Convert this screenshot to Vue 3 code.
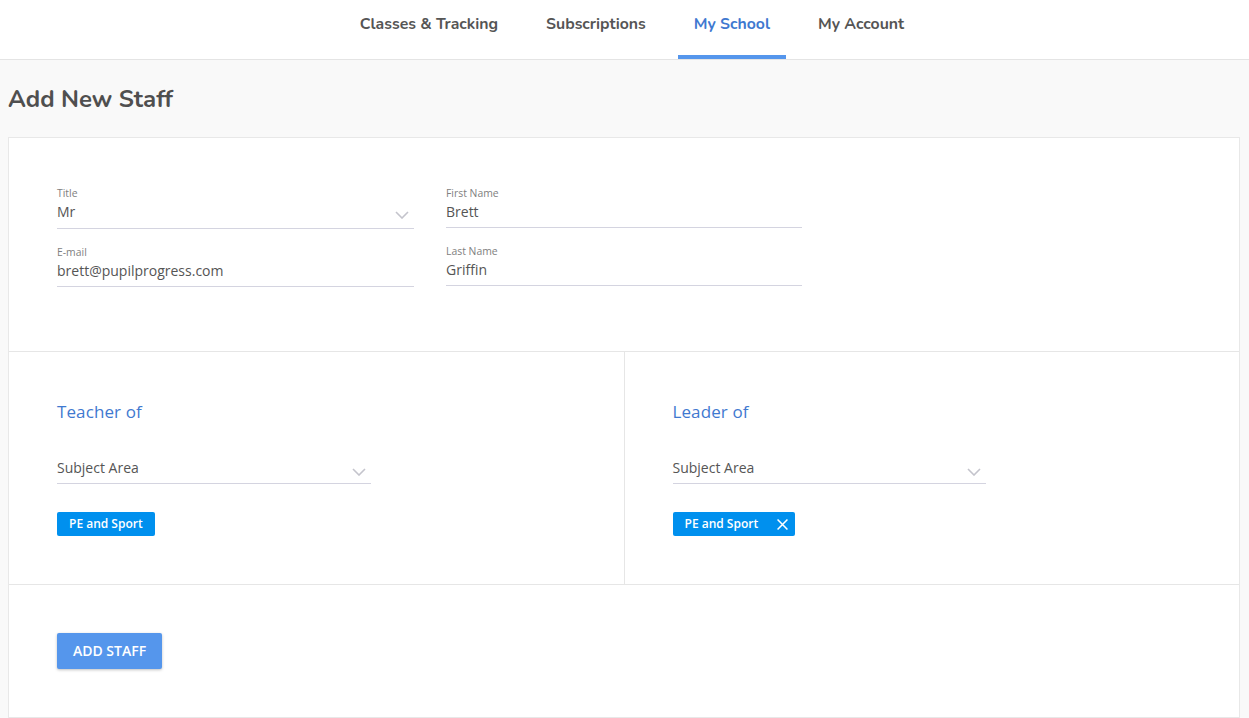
<script setup>
const tabs = [
  { label: 'Classes & Tracking', active: false },
  { label: 'Subscriptions', active: false },
  { label: 'My School', active: true },
  { label: 'My Account', active: false },
]
</script>

<template>
  <div class="page">
    <header class="topbar">
      <nav class="tabs">
        <a v-for="t in tabs" :key="t.label" class="tab" :class="{ active: t.active }">{{ t.label }}</a>
      </nav>
    </header>
    <h1 class="heading">Add New Staff</h1>
    <main class="card">
      <section class="details">
        <div class="col">
          <div class="field">
            <span class="lbl">Title</span>
            <span class="val">Mr</span>
            <svg class="chev" viewBox="0 0 14 8"><path d="M1 1l6 6 6-6" /></svg>
          </div>
          <div class="field second">
            <span class="lbl">E-mail</span>
            <span class="val">brett@pupilprogress.com</span>
          </div>
        </div>
        <div class="col">
          <div class="field alt">
            <span class="lbl">First Name</span>
            <span class="val">Brett</span>
          </div>
          <div class="field second alt">
            <span class="lbl">Last Name</span>
            <span class="val">Griffin</span>
          </div>
        </div>
      </section>
      <section class="split">
        <div class="pane">
          <h2 class="pane-title">Teacher of</h2>
          <div class="select">
            <span class="val">Subject Area</span>
            <svg class="chev" viewBox="0 0 14 8"><path d="M1 1l6 6 6-6" /></svg>
          </div>
          <div class="chip">PE and Sport</div>
        </div>
        <div class="pane right">
          <h2 class="pane-title">Leader of</h2>
          <div class="select">
            <span class="val">Subject Area</span>
            <svg class="chev" viewBox="0 0 14 8"><path d="M1 1l6 6 6-6" /></svg>
          </div>
          <div class="chip removable">
            PE and Sport
            <svg class="x" viewBox="0 0 10 10"><path d="M0.5 0.5l9 9M9.5 0.5l-9 9" /></svg>
          </div>
        </div>
      </section>
      <section class="actions">
        <button class="btn">ADD STAFF</button>
      </section>
    </main>
  </div>
</template>

<style>
body { margin: 0; background: #f8f8f8; }
</style>

<style scoped>
.page {
  height: 718px;
  overflow: hidden;
  background: #f9f9f9;
  font-family: "Open Sans", sans-serif;
  color: #555;
}
.topbar {
  height: 59px;
  background: #fff;
  border-bottom: 1px solid #e4e4e4;
  display: flex;
  justify-content: center;
}
.tabs {
  display: flex;
  gap: 16px;
  margin-left: 15px;
}
.tab {
  padding: 0 16px;
  height: 59px;
  box-sizing: border-box;
  border-bottom: 4px solid transparent;
  line-height: 48px;
  font-family: "Nunito", Lato, sans-serif;
  font-weight: 700;
  font-size: 15.8px;
  color: #555;
}
.tab.active {
  color: #3f79d0;
  border-bottom-color: #5596ec;
}
.heading {
  margin: 0;
  padding: 2px 8px 0;
  height: 77px;
  box-sizing: border-box;
  line-height: 75px;
  font-family: "Nunito", Lato, sans-serif;
  font-weight: 700;
  font-size: 24px;
  color: #4f4f4f;
}
.card {
  margin: 0 9px 0 8px;
  background: #fff;
  border: 1px solid #e8e8e8;
  box-sizing: border-box;
  height: 581px;
}
.details {
  height: 214px;
  box-sizing: border-box;
  padding: 48px 0 0 48px;
  display: flex;
  gap: 32px;
  border-bottom: 1px solid #e6e6e6;
}
.col { width: 357px; }
.col + .col { width: 356px; }
.field {
  position: relative;
  height: 43px;
  box-sizing: border-box;
  border-bottom: 1px solid #d4d4e0;
  display: flex;
  flex-direction: column;
}
.field.alt, .field.second { height: 42px; }
.field.second { margin-top: 16px; }
.lbl {
  font-size: 10.4px;
  line-height: 14px;
  margin-bottom: 2px;
  color: #808080;
}
.val {
  font-size: 14px;
  line-height: 19px;
  color: #555;
}
.chev {
  position: absolute;
  right: 5px;
  top: 25px;
  width: 14px;
  height: 8px;
  fill: none;
  stroke: #c4c4cc;
  stroke-width: 1.6;
}
.split {
  height: 233px;
  box-sizing: border-box;
  display: flex;
  border-bottom: 1px solid #e6e6e6;
}
.pane {
  width: 615px;
  box-sizing: border-box;
  padding: 48px 0 0 48px;
}
.pane.right {
  width: 616px;
  border-left: 1px solid #e6e6e6;
}
.pane-title {
  margin: 0;
  font-size: 17px;
  line-height: 24px;
  font-weight: 500;
  letter-spacing: 0.1px;
  color: #3f79d0;
}
.select {
  position: relative;
  width: 314px;
  height: 31px;
  margin-top: 29px;
  box-sizing: border-box;
  border-bottom: 1px solid #d4d4e0;
  padding-top: 3px;
}
.right .select { width: 313px; }
.select .chev { top: 15px; }
.chip {
  display: inline-flex;
  align-items: center;
  margin-top: 28px;
  height: 24px;
  padding: 0 12px 1px;
  box-sizing: border-box;
  border-radius: 2px;
  background: #0090ee;
  color: #fff;
  font-size: 12px;
  font-weight: 600;
}
.chip.removable { gap: 19px; padding-right: 7px; }
.x {
  width: 11px;
  height: 11px;
  margin-top: 1px;
  fill: none;
  stroke: #fff;
  stroke-width: 1.4;
}
.actions {
  padding: 48px 0 0 48px;
}
.btn {
  display: block;
  width: 105px;
  height: 36px;
  border: 0;
  padding: 0 0 1px;
  border-radius: 2px;
  background: #5596ec;
  color: #fff;
  font-family: inherit;
  font-size: 14px;
  font-weight: 600;
  box-shadow: 0 1px 3px rgba(0, 0, 0, 0.25);
}
</style>
